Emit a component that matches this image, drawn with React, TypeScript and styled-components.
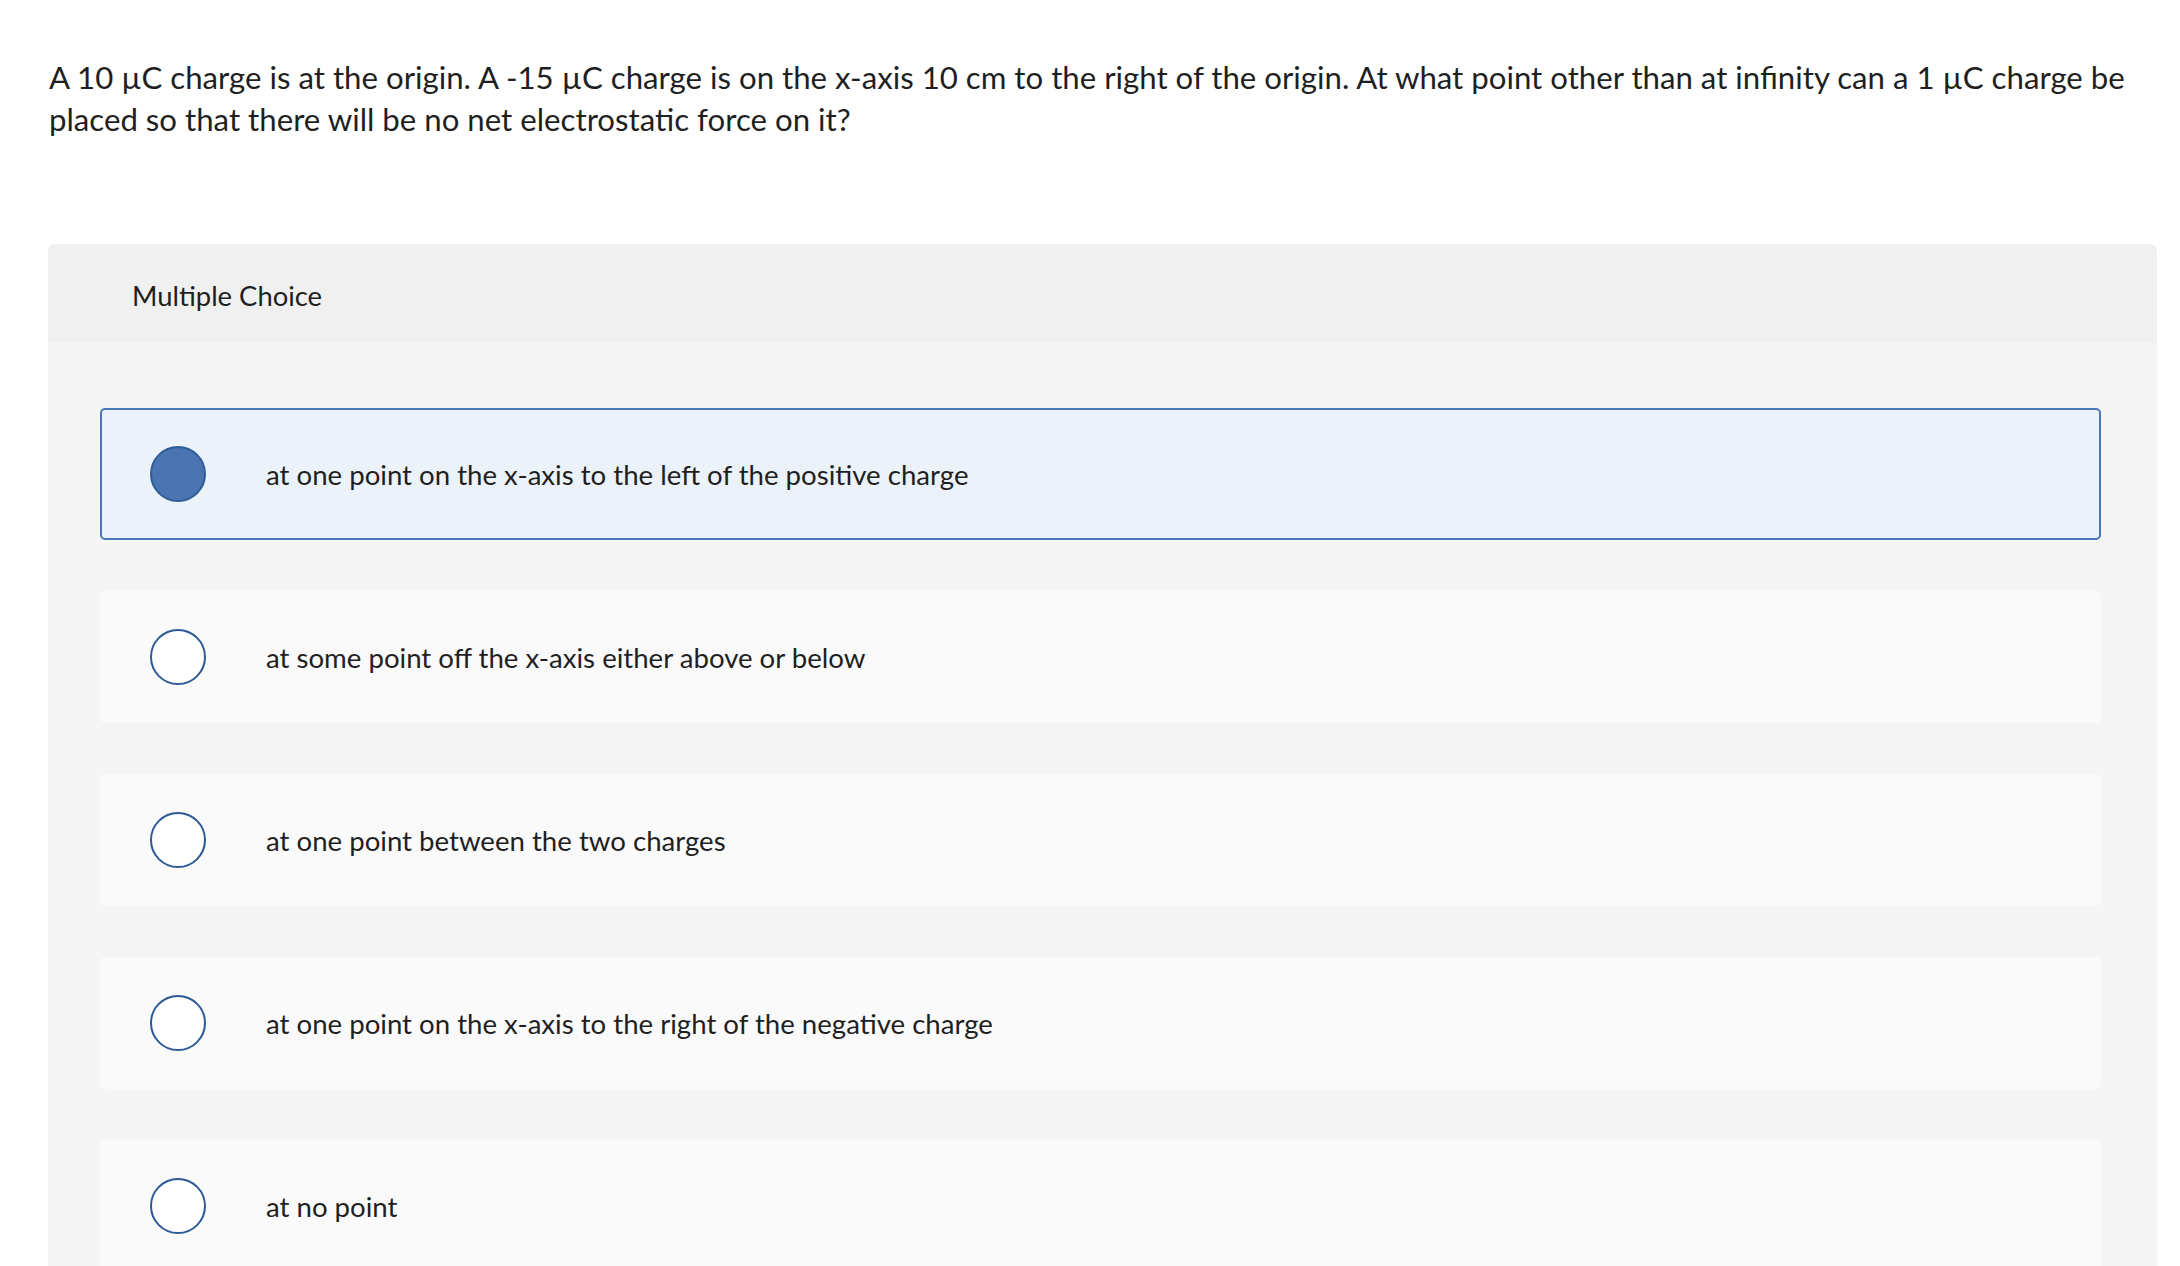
import React from "react";
import styled, { createGlobalStyle } from "styled-components";

const GlobalStyle = createGlobalStyle`
  html, body {
    margin: 0;
    padding: 0;
    background: #ffffff;
  }
  body {
    font-family: "Lato", "Open Sans", sans-serif;
    color: #1f1f1f;
    -webkit-font-smoothing: antialiased;
  }
  * { box-sizing: border-box; }
`;

const Page = styled.main`
  padding: 56px 23px 0 48px;
`;

const Prompt = styled.p`
  margin: 0 0 104px 0;
  padding-left: 1px;
  font-size: 31.2px;
  line-height: 42px;
  color: #1f1f1f;
`;

const Card = styled.section`
  border-radius: 7px 7px 0 0;
  overflow: hidden;
  background: #f5f5f5;
`;

const CardHeader = styled.header`
  height: 99px;
  display: flex;
  align-items: center;
  padding: 3px 0 0 84px;
  background: #f0f0f0;
  font-size: 27.4px;
  color: #1f1f1f;
`;

const OptionList = styled.div`
  display: flex;
  flex-direction: column;
  gap: 51px;
  padding: 65px 56px 60px 52px;
`;

const Option = styled.label<{ $selected?: boolean }>`
  height: 132px;
  display: flex;
  align-items: center;
  padding-left: 48px;
  border-radius: 5px;
  border: 2px solid ${(p) => (p.$selected ? "#4a77b6" : "transparent")};
  background: ${(p) => (p.$selected ? "#ebf2fa" : "#fafafa")};
  cursor: pointer;
`;

const Radio = styled.span<{ $checked?: boolean }>`
  flex: none;
  width: 56px;
  height: 56px;
  border-radius: 50%;
  border: 2px solid ${(p) => (p.$checked ? "#2f5d98" : "#2d5a94")};
  background: ${(p) => (p.$checked ? "#4a74b2" : "#ffffff")};
`;

const OptionText = styled.span`
  margin-left: 60px;
  padding-top: 2px;
  font-size: 27.6px;
  line-height: 36px;
  color: #1f1f1f;
`;

const options = [
  "at one point on the x-axis to the left of the positive charge",
  "at some point off the x-axis either above or below",
  "at one point between the two charges",
  "at one point on the x-axis to the right of the negative charge",
  "at no point",
];

export default function App() {
  const selected = 0;
  return (
    <>
      <GlobalStyle />
      <Page>
        <Prompt>
          A 10 µC charge is at the origin. A -15 µC charge is on the x-axis 10 cm to the right of the origin. At what
          point other than at infinity can a 1 µC charge be placed so that there will be no net electrostatic force on
          it?
        </Prompt>
        <Card>
          <CardHeader>Multiple Choice</CardHeader>
          <OptionList>
            {options.map((text, i) => (
              <Option key={text} $selected={i === selected}>
                <Radio $checked={i === selected} />
                <OptionText>{text}</OptionText>
              </Option>
            ))}
          </OptionList>
        </Card>
      </Page>
    </>
  );
}
